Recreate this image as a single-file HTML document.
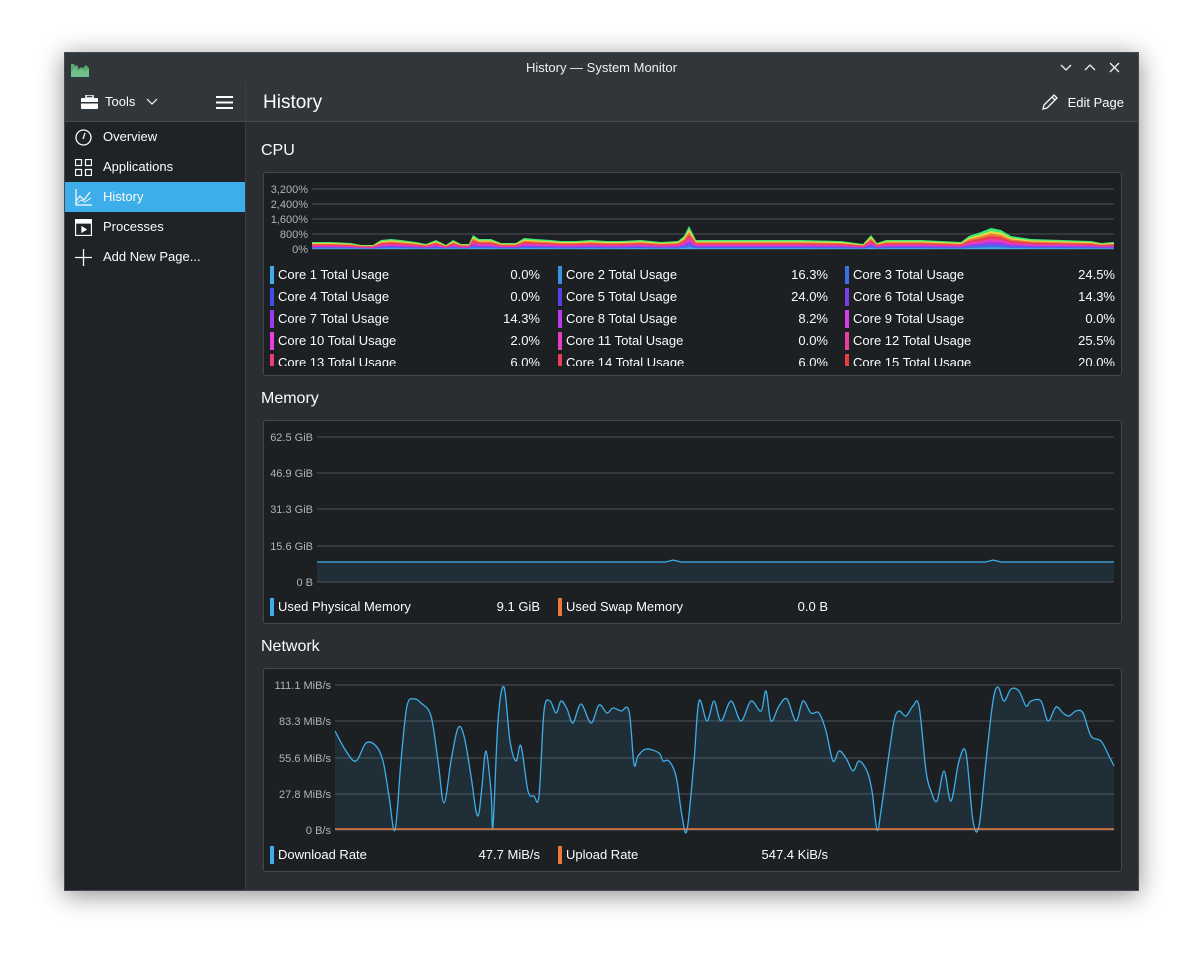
<!DOCTYPE html>
<html><head><meta charset="utf-8">
<style>
*{margin:0;padding:0;box-sizing:border-box}
body{width:1203px;height:967px;background:#fff;font-family:"Liberation Sans",sans-serif;color:#fcfcfc;position:relative;overflow:hidden}
.win{position:absolute;left:64px;top:52px;width:1075px;height:839px;background:#2a2e32;border:1px solid #444a50;box-shadow:0 4px 24px rgba(0,0,0,.45);overflow:hidden}
.title{position:absolute;left:0;top:0;width:100%;height:30px;background:#31363b;text-align:center;font-size:13px;line-height:30px;color:#eff0f1}
.side{position:absolute;left:0;top:29px;width:181px;bottom:0;background:#1f2226;border-right:1px solid #3a3f44}
.sidehead{height:40px;background:#31363b;border-bottom:1px solid #454a50;position:relative}
.mainhead{position:absolute;left:181px;top:29px;right:0;height:40px;background:#31363b;border-bottom:1px solid #454a50}
.item{height:30px;line-height:30px;font-size:13px;padding-left:38px;position:relative}
.item.sel{background:#3daee9}
.item svg{position:absolute;left:10px;top:7px}
.h{position:absolute;left:196px;font-size:16px;color:#fcfcfc}
.card{position:absolute;left:198px;width:859px;background:#1d2023;border:1px solid #42474d;border-radius:3px}
.lg{position:absolute;font-size:13px;height:18px;line-height:18px;white-space:nowrap}
.lg i{position:absolute;left:0;top:0;width:4px;height:18px}
.lg span{position:absolute;left:8px}
.lg b{font-weight:normal;position:absolute;right:0}
</style></head><body>
<div class="win">
 <div class="title">History — System Monitor
  <svg style="position:absolute;left:6px;top:7px" width="18" height="17"><path d="M0 17V4h3l1 2 2-1 2 4 2-2 2 1 3-3 3 3v9z" fill="#5aaa6e"/><path d="M0 11l4-3 3 3 3-2 4 2 4-2v8H0z" fill="#6fc08a"/></svg>
  <svg style="position:absolute;right:8px;top:8px" width="70" height="14" stroke="#eff0f1" stroke-width="1.3" fill="none"><path d="M1 4l5 5 5-5"/><path d="M25 9l5-5 5 5"/><path d="M50 2l9 9M59 2l-9 9"/></svg>
 </div>
 <div class="side">
  <div class="sidehead">
   <svg style="position:absolute;left:16px;top:13px" width="17" height="14"><rect x="5" y="0" width="7" height="3" fill="none" stroke="#fcfcfc" stroke-width="1.5"/><rect x="0" y="3" width="17" height="11" rx="1" fill="#fcfcfc"/><rect x="0" y="7" width="17" height="1.5" fill="#31363b"/></svg>
   <span style="position:absolute;left:40px;top:12px;font-size:13px">Tools</span>
   <svg style="position:absolute;left:81px;top:16px" width="12" height="8" stroke="#fcfcfc" fill="none" stroke-width="1.2"><path d="M1 1l5 5 5-5"/></svg>
   <svg style="position:absolute;left:151px;top:14px" width="17" height="13" fill="#fcfcfc"><rect y="0" width="17" height="2"/><rect y="5.5" width="17" height="2"/><rect y="11" width="17" height="2"/></svg>
  </div>
  <div class="item"><svg width="17" height="17" fill="none" stroke="#fcfcfc" stroke-width="1.3"><circle cx="8.5" cy="8.5" r="7.5"/><path d="M8 10l2-6"/></svg>Overview</div>
  <div class="item"><svg width="17" height="17" fill="none" stroke="#fcfcfc" stroke-width="1.2"><rect x=".5" y=".5" width="6" height="6"/><rect x="10.5" y=".5" width="6" height="6"/><rect x=".5" y="10.5" width="6" height="6"/><rect x="10.5" y="10.5" width="6" height="6"/></svg>Applications</div>
  <div class="item sel"><svg width="17" height="17" fill="none" stroke="#fcfcfc" stroke-width="1.2"><path d="M1 0v16h16"/><path d="M1 12l4-5 4 4 6-8"/><path d="M1 15l5-4 4 2 6-4" stroke-width=".8"/></svg>History</div>
  <div class="item"><svg width="17" height="17" fill="none" stroke="#fcfcfc" stroke-width="1.3"><rect x=".5" y=".5" width="16" height="16"/><rect x="1" y="1" width="15" height="3" fill="#fcfcfc"/><path d="M7 8v5l4-2.5z" fill="#fcfcfc"/></svg>Processes</div>
  <div class="item"><svg width="17" height="17" stroke="#fcfcfc" stroke-width="1.3"><path d="M8.5 0v17M0 8.5h17"/></svg>Add New Page...</div>
 </div>
 <div class="mainhead">
  <span style="position:absolute;left:17px;top:10px;font-size:19px">History</span>
  <svg style="position:absolute;right:80px;top:12px" width="16" height="16" fill="none" stroke="#fcfcfc" stroke-width="1.3"><path d="M1 15l1-4L12 1l3 3L5 14z M10 3l3 3"/></svg>
  <span style="position:absolute;right:14px;top:13px;font-size:13px">Edit Page</span>
 </div>
 <div class="h" style="top:89px">CPU</div>
 <div class="card" style="top:119px;height:204px">
  <svg id="cpu" style="position:absolute;left:0;top:0" width="859" height="90"></svg>
  <div id="cpulg"></div>
 </div>
 <div class="h" style="top:337px">Memory</div>
 <div class="card" style="top:367px;height:204px">
  <svg id="mem" style="position:absolute;left:0;top:0" width="859" height="175"></svg>
  <div class="lg" style="left:6px;top:177px;width:270px"><i style="background:#3daee9"></i><span>Used Physical Memory</span><b>9.1 GiB</b></div>
  <div class="lg" style="left:294px;top:177px;width:270px"><i style="background:#e9793d"></i><span>Used Swap Memory</span><b>0.0 B</b></div>
 </div>
 <div class="h" style="top:585px">Network</div>
 <div class="card" style="top:615px;height:204px">
  <svg id="net" style="position:absolute;left:0;top:0" width="859" height="175"></svg>
  <div class="lg" style="left:6px;top:177px;width:270px"><i style="background:#3daee9"></i><span>Download Rate</span><b>47.7 MiB/s</b></div>
  <div class="lg" style="left:294px;top:177px;width:270px"><i style="background:#e9793d"></i><span>Upload Rate</span><b>547.4 KiB/s</b></div>
 </div>
</div>
<script>
function grid(ox,oy,x0,x1,ys,labels){
  let s='';
  ys.forEach((y,i)=>{s+=`<line x1="${x0-ox}" x2="${x1-ox}" y1="${y-oy}" y2="${y-oy}" stroke="#4d5257" stroke-width="1"/>`;
  s+=`<text x="${x0-ox-4}" y="${y-oy+4}" font-size="11" fill="#b0b4b8" text-anchor="end" font-family="Liberation Sans">${labels[i]}</text>`;});
  return s;
}
function smooth(pts){
 let d=`M${pts[0][0]} ${pts[0][1]}`;
 for(let i=0;i<pts.length-1;i++){
  const p0=pts[i-1]||pts[i],p1=pts[i],p2=pts[i+1],p3=pts[i+2]||p2;
  const c1=[p1[0]+(p2[0]-p0[0])/6,p1[1]+(p2[1]-p0[1])/6],c2=[p2[0]-(p3[0]-p1[0])/6,p2[1]-(p3[1]-p1[1])/6];
  d+=` C${c1[0].toFixed(1)} ${c1[1].toFixed(1)} ${c2[0].toFixed(1)} ${c2[1].toFixed(1)} ${p2[0]} ${p2[1]}`;
 }
 return d;
}
(function(){
 const ox=263,oy=172;
 let s=grid(ox,oy,311,1113,[188,203,218,233,248],['3,200%','2,400%','1,600%','800%','0%']);
 const P=[[311,7],[330,7],[350,6],[360,4],[372,4],[380,9],[390,10],[400,9],[415,7],[425,5],[435,9],[445,4],[452,9],[460,5],[468,5],[472,14],[478,10],[490,10],[500,6],[515,6],[523,11],[535,10],[550,9],[560,8],[575,8],[590,9],[605,8],[620,8],[640,9],[660,7],[677,8],[683,13],[688,23],[695,9],[720,9],[760,9],[800,9],[840,8],[862,5],[870,14],[876,6],[885,9],[920,9],[960,7],[968,13],[980,17],[990,21],[1000,19],[1010,13],[1030,10],[1060,9],[1090,8],[1100,6],[1113,7]];
 const layers=[[1,'#3de97a'],[0.86,'#e9d93d'],[0.74,'#e9793d'],[0.62,'#e93d50'],[0.48,'#e93dc0'],[0.34,'#9a3de9'],[0.2,'#3d6fe9'],[0.08,'#3daee9']];
 layers.forEach(([f,c])=>{let d=`M${311-ox} ${248-oy}`;P.forEach(([x,h])=>d+=` L${x-ox} ${248-oy-h*f}`);d+=` L${1113-ox} ${248-oy}Z`;s+=`<path d="${d}" fill="${c}"/>`;});
 document.getElementById('cpu').innerHTML=s;
 const cols=['#3daee9','#3d8ee9','#3d6fe9','#3d4ee9','#5a3de9','#7a3de9','#9a3de9','#b83de9','#d83de9','#e93de0','#e93dc0','#e93da0','#e93d80','#e93d60','#e93d40'];
 const vals=['0.0%','16.3%','24.5%','0.0%','24.0%','14.3%','14.3%','8.2%','0.0%','2.0%','0.0%','25.5%','6.0%','6.0%','20.0%'];
 let h='';
 for(let i=0;i<15;i++){const c=i%3,r=Math.floor(i/3);const x=[6,294,581][c];const y=93+r*22;
  h+=`<div class="lg" style="left:${x}px;top:${y}px;width:270px;${r==4?'height:12px;overflow:hidden':''}"><i style="background:${cols[i]}"></i><span>Core ${i+1} Total Usage</span><b>${vals[i]}</b></div>`;}
 document.getElementById('cpulg').innerHTML=h;
})();
(function(){
 const ox=263,oy=420;
 let s=grid(ox,oy,316,1113,[436,472,508,545,581],['62.5 GiB','46.9 GiB','31.3 GiB','15.6 GiB','0 B']);
 let d=`M${316-ox} ${561-oy} L${665-ox} ${561-oy} L${672-ox} ${559-oy} L${680-ox} ${561-oy} L${985-ox} ${561-oy} L${992-ox} ${559-oy} L${1000-ox} ${561-oy} L${1113-ox} ${561-oy}`;
 s+=`<path d="${d} L${1113-ox} ${581-oy} L${316-ox} ${581-oy}Z" fill="#3daee9" fill-opacity=".1"/><path d="${d}" fill="none" stroke="#3daee9" stroke-width="1.3"/>`;
 document.getElementById('mem').innerHTML=s;
})();
(function(){
 const ox=263,oy=668;
 let s=grid(ox,oy,334,1113,[684,720,757,793,829],['111.1 MiB/s','83.3 MiB/s','55.6 MiB/s','27.8 MiB/s','0 B/s']);
 const P=[[334,730],[345,750],[355,760],[365,742],[375,745],[382,760],[388,795],[394,829],[400,760],[406,705],[413,698],[420,702],[430,715],[437,760],[443,802],[450,760],[457,727],[463,735],[470,775],[475,810],[478,812],[481,785],[485,750],[490,790],[492,825],[497,720],[503,686],[509,740],[515,760],[520,745],[527,790],[533,795],[538,795],[543,710],[549,700],[555,712],[560,700],[566,708],[572,722],[580,703],[590,722],[598,704],[606,712],[612,707],[620,710],[628,710],[633,763],[637,755],[645,748],[658,752],[662,760],[668,760],[675,775],[681,815],[686,829],[693,760],[698,700],[706,720],[713,700],[720,720],[730,700],[740,720],[750,700],[760,710],[765,690],[770,720],[778,705],[786,698],[795,720],[802,700],[810,712],[818,712],[825,730],[832,760],[838,750],[845,757],[852,770],[858,760],[866,770],[871,790],[876,829],[880,810],[887,760],[893,720],[898,710],[905,715],[912,705],[918,705],[925,770],[930,790],[936,800],[943,770],[950,800],[958,760],[965,752],[972,820],[978,825],[985,760],[992,700],[997,686],[1003,700],[1010,688],[1018,690],[1025,705],[1030,700],[1040,700],[1047,720],[1055,706],[1062,712],[1068,715],[1075,710],[1082,712],[1090,735],[1100,740],[1108,755],[1113,765]].map(([x,y])=>[x-ox,y-oy]);
 let d=smooth(P);
 s+=`<path d="${d} L${1113-ox} ${829-oy} L${334-ox} ${829-oy}Z" fill="#3daee9" fill-opacity=".1"/><path d="${d}" fill="none" stroke="#3daee9" stroke-width="1.3"/>`;
 s+=`<path d="M${334-ox} ${828-oy} L${1113-ox} ${828-oy}" stroke="#e9793d" stroke-width="1.5"/>`;
 document.getElementById('net').innerHTML=s;
})();
</script>
</body></html>
